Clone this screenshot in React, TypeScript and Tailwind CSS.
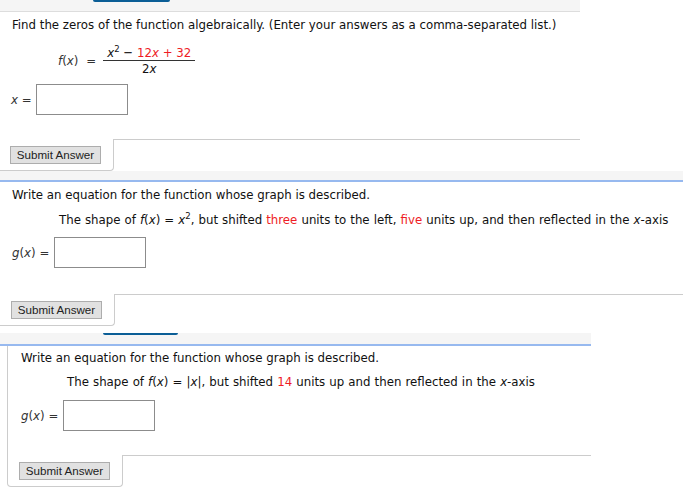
import React from "react";

const RED = "text-[#ee1c25]";

function I({ children, className = "" }: { children: React.ReactNode; className?: string }) {
  return <span className={`italic ${className}`}>{children}</span>;
}

function SubmitFooter({ lineWidth, boxClass }: { lineWidth: string; boxClass: string }) {
  return (
    <div className={`flex ${lineWidth}`}>
      <div className={`h-[32px] shrink-0 border-b border-r border-[#cccccc] pt-[7px] ${boxClass}`}>
        <button className="flex h-[18px] w-[91px] items-center justify-center border border-[#adadad] bg-[#e1e1e1] font-['Liberation_Sans',Arial,sans-serif] text-[11.6px] leading-none text-[#222]">
          Submit Answer
        </button>
      </div>
      <div className="flex-1 border-t border-[#cccccc]" />
    </div>
  );
}

function Input() {
  return <div className="h-[31px] w-[92px] border border-[#8c8c8c] bg-white" />;
}

export default function App() {
  return (
    <div className="relative h-[491px] w-[683px] overflow-hidden bg-white font-['DejaVu_Sans_Condensed','DejaVu_Sans',sans-serif] text-[13.1px] leading-[16px] text-[#111] [font-stretch:condensed]">
      {/* Section 1 */}
      <div className="h-[12px] w-[580px] border-b border-[#dddddd] bg-[#f5f5f5]">
        <div className="ml-[93px] h-[2px] w-[77px] rounded-b-[2px] bg-[#0b5e96]" />
      </div>
      <div className="pl-[12px]">
        <p className="mt-[5px]">
          Find the zeros of the function algebraically. (Enter your answers as a comma-separated list.)
        </p>
        <div className="ml-[46px] mt-[12px] flex items-center">
          <span className="text-[#333]">
            <I>f</I>(<I>x</I>)
          </span>
          <span className="ml-[8px] text-[#333]">=</span>
          <div className="ml-[7px] flex flex-col items-center">
            <div className="h-[15px] leading-[15px]">
              <I>x</I>
              <sup className="text-[9.5px]">2</sup>
              <span> − </span>
              <span className={RED}>
                12<I>x</I> + 32
              </span>
            </div>
            <div className="h-px w-[92px] bg-[#333]" />
            <div className="h-[15px] leading-[15px]">
              2<I>x</I>
            </div>
          </div>
        </div>
        <div className="mt-[8px] flex items-center">
          <span className="-ml-px text-[#333]">
            <I>x</I> =
          </span>
          <div className="ml-[4px]">
            <Input />
          </div>
        </div>
      </div>
      <div className="mt-[24px]">
        <SubmitFooter lineWidth="w-[580px]" boxClass="w-[114px] rounded-br-[4px] pl-[10px]" />
      </div>
      <div className="h-[11px] w-full border-b-2 border-[#97b9ef] bg-[#f5f5f5]" />

      {/* Section 2 */}
      <div className="pl-[12px]">
        <p className="mt-[5px]">Write an equation for the function whose graph is described.</p>
        <p className="mt-[9px] pl-[47px] [word-spacing:0.3px]">
          The shape of <I>f</I>(<I>x</I>) = <I>x</I>
          <sup className="text-[9.5px]">2</sup>, but shifted <span className={RED}>three</span> units to the
          left, <span className={RED}>five</span> units up, and then reflected in the <I>x</I>-axis
        </p>
        <div className="mt-[9px] flex items-center">
          <span className="text-[#333]">
            <I>g</I>(<I>x</I>) =
          </span>
          <div className="ml-[5px]">
            <Input />
          </div>
        </div>
      </div>
      <div className="mt-[26px]">
        <SubmitFooter lineWidth="w-full" boxClass="w-[115px] rounded-br-[4px] pl-[11px]" />
      </div>

      {/* Section 3 */}
      <div className="mt-[7px] h-[13px] w-[591px] border-b-2 border-[#97b9ef] bg-[#f5f5f5]">
        <div className="ml-[103px] h-[2px] w-[75px] rounded-b-[2px] bg-[#0b5e96]" />
      </div>
      <div className="ml-[7px] w-[584px]">
        <div className="border-l border-[#cccccc] pb-[24px] pl-[13px] pt-[4px]">
          <p>Write an equation for the function whose graph is described.</p>
          <p className="mt-[8px] pl-[46px] [word-spacing:0.35px]">
            The shape of <I>f</I>(<I>x</I>) = |<I>x</I>|, but shifted <span className={RED}>14</span> units up
            and then reflected in the <I>x</I>-axis
          </p>
          <div className="mt-[10px] flex items-center">
            <span className="text-[#333]">
              <I>g</I>(<I>x</I>) =
            </span>
            <div className="ml-[5px]">
              <Input />
            </div>
          </div>
        </div>
        <SubmitFooter
          lineWidth="w-full"
          boxClass="w-[116px] rounded-b-[4px] border-l pl-[11px]"
        />
      </div>
    </div>
  );
}
